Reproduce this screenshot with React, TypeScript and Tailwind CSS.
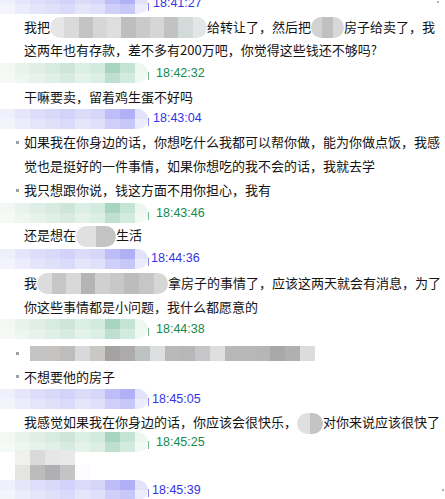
import React from 'react';

type Tone = 'blue' | 'green';

const BLUE_TOP = ['#f0f0fc', '#e6e6fb', '#dedefb', '#d9d9fa', '#d2d2fa', '#dcdcfa', '#d6d6f9', '#bdbdf8', '#b0b0f7', '#e2e2fb'];
const BLUE_BOT = ['#f4f4fd', '#ececfc', '#e4e4fb', '#e0e0fb', '#dadafa', '#e6e6fb', '#e0e0fa', '#cfcff9', '#c8c8f8', '#ececfc'];
const GREEN_TOP = ['#f3f8f5', '#e8f3ed', '#dfeee6', '#d8ebe1', '#cde6d9', '#dcefe6', '#d2eadf', '#a8d5bf', '#c4e4d5', '#eef6f1'];
const GREEN_BOT = ['#f6faf7', '#edf6f1', '#e6f2eb', '#e0efe7', '#d8ebe1', '#e4f2ea', '#dcefe6', '#bfe0cf', '#d2eadf', '#f2f8f4'];

const GRAY_A = ['#e6e6e6', '#dadada', '#c4c4c4', '#d6d6d6', '#dedede', '#bebebe', '#cacaca', '#d6d6d6', '#c2c2c2', '#d2dada', '#e2e6e6'];
const GRAY_B = ['#d2d2d2', '#c0c0c0', '#d8d8d8'];
const GRAY_C = ['#dcdcdc', '#c6c6c6', '#d8d8d8', '#b4b4b4', '#d0d0d0', '#c8c8c8', '#bcbcbc', '#c6c6c6', '#d6d6d6'];
const GRAY_D = ['#e0e0e0', '#c4c4c4'];
const GRAY_LINE = [
  '#c2c3c5', '#c5c2c0', '#bdbdbd', '#d8d9db', '#cac8c4', '#a4a2a2', '#adabab', '#bdc2c2', '#dcdee0',
  '#b9b9b9', '#b8b6b8', '#c4c6c8', '#e0dedc', '#b8b8b8', '#b8b8b8', '#b6b6b6', '#a8a8a8', '#b0b0b0', '#dcdcdc',
];

function NameBlur({ tone, time, mark }: { tone: Tone; time: string; mark: string }) {
  const top = tone === 'blue' ? BLUE_TOP : GREEN_TOP;
  const bot = tone === 'blue' ? BLUE_BOT : GREEN_BOT;
  const color = tone === 'blue' ? 'text-[#3434e6]' : 'text-[#158a4c]';
  return (
    <div className="flex items-center h-full">
      <div className="flex flex-col w-[148px] h-[20px] rounded-r-full overflow-hidden">
        <div className="flex h-[10px]">
          {top.map((c, i) => (
            <span key={i} className="w-[15px] h-full shrink-0" style={{ background: c }} />
          ))}
        </div>
        <div className="flex h-[10px]">
          {bot.map((c, i) => (
            <span key={i} className="w-[15px] h-full shrink-0" style={{ background: c }} />
          ))}
        </div>
      </div>
      <span className={`w-px h-[8px] mt-[6px] bg-current opacity-60 ${color} ${mark}`} />
      <span className={`font-['Liberation_Sans',sans-serif] text-[12.5px] leading-none ${color}`}>{time}</span>
    </div>
  );
}

function Blur({ colors, width }: { colors: string[]; width: string }) {
  return (
    <span className={`inline-flex align-middle h-[21px] -my-[4px] rounded-full overflow-hidden ${width}`}>
      {colors.map((c, i) => (
        <span key={i} className="flex-1 h-full" style={{ background: c }} />
      ))}
    </span>
  );
}

function Line({ children, dot, h }: { children: React.ReactNode; dot?: boolean; h: string }) {
  return (
    <div className={`relative flex items-center pl-[24px] ${h}`}>
      {dot && <span className="absolute left-[16px] top-1/2 -mt-[1px] w-[3px] h-[3px] bg-[#9aa0a6]" />}
      <span className="whitespace-nowrap">{children}</span>
    </div>
  );
}

export default function App() {
  return (
    <div className="w-[445px] h-[499px] overflow-hidden bg-white text-[13px] leading-none text-[#141414] font-['Noto_Sans_CJK_SC',sans-serif]">
      <div className="flex flex-col -mt-[9px]">
        <div className="h-[25px] relative">
          <NameBlur tone="blue" time="18:41:27" mark="mr-[4px]" />
          <span className="absolute right-[6px] top-[10px] w-[2px] h-[2px] bg-[#b0b0b0]" />
        </div>
        <Line h="h-[22px]">
          我把<Blur colors={GRAY_A} width="w-[157px]" />给转让了，然后把<Blur colors={GRAY_B} width="w-[33px]" />房子给卖了，我
        </Line>
        <Line h="h-[23px]">这两年也有存款，差不多有200万吧，你觉得这些钱还不够吗?</Line>
        <div className="h-[24px]">
          <NameBlur tone="green" time="18:42:32" mark="mr-[7px]" />
        </div>
        <Line h="h-[22px]">干嘛要卖，留着鸡生蛋不好吗</Line>
        <div className="h-[23px]">
          <NameBlur tone="blue" time="18:43:04" mark="mr-[4px]" />
        </div>
        <Line h="h-[23px]" dot>
          如果我在你身边的话，你想吃什么我都可以帮你做，能为你做点饭，我感
        </Line>
        <Line h="h-[25px]">觉也是挺好的一件事情，如果你想吃的我不会的话，我就去学</Line>
        <Line h="h-[23px]" dot>
          我只想跟你说，钱这方面不用你担心，我有
        </Line>
        <div className="h-[24px]">
          <NameBlur tone="green" time="18:43:46" mark="mr-[7px]" />
        </div>
        <Line h="h-[21px]">
          还是想在<Blur colors={GRAY_D} width="w-[40px]" />生活
        </Line>
        <div className="h-[25px]">
          <NameBlur tone="blue" time="18:44:36" mark="mr-[2px]" />
        </div>
        <Line h="h-[24px]">
          我<Blur colors={GRAY_C} width="w-[131px]" />拿房子的事情了，应该这两天就会有消息，为了
        </Line>
        <Line h="h-[22px]">你这些事情都是小问题，我什么都愿意的</Line>
        <div className="h-[24px]">
          <NameBlur tone="green" time="18:44:38" mark="mr-[7px]" />
        </div>
        <div className="relative flex items-center h-[24px] pl-[30px]">
          <span className="absolute left-[16px] top-1/2 -mt-[1px] w-[3px] h-[3px] bg-[#9aa0a6]" />
          <div className="flex h-[15px]">
            {GRAY_LINE.map((c, i) => (
              <span key={i} className="w-[15px] h-full" style={{ background: c }} />
            ))}
          </div>
        </div>
        <Line h="h-[22px]" dot>
          不想要他的房子
        </Line>
        <div className="h-[24px]">
          <NameBlur tone="blue" time="18:45:05" mark="mr-[3px]" />
        </div>
        <Line h="h-[23px]">
          我感觉如果我在你身边的话，你应该会很快乐，<Blur colors={GRAY_D} width="w-[26px]" />对你来说应该很快了
        </Line>
        <div className="h-[16px] overflow-visible">
          <div className="-mt-[4px] h-[24px]">
            <NameBlur tone="green" time="18:45:25" mark="mr-[7px]" />
          </div>
        </div>
        <div className="grid grid-cols-[15px_15px_15px_15px_15px_15px] grid-rows-[15px_15px] h-[30px]">
          <span />
          <span className="bg-[#f0f0ee]" />
          <span className="bg-[#dadada]" />
          <span className="bg-[#e6e6e6]" />
          <span className="bg-[#e9e9e9]" />
          <span />
          <span />
          <span className="bg-[#e4e4e2]" />
          <span className="bg-[#bcbcbc]" />
          <span className="bg-[#b0b0b4]" />
          <span className="bg-[#c4c4c4]" />
          <span className="bg-[#fafcff]" />
        </div>
        <div className="h-[20px] relative">
          <NameBlur tone="blue" time="18:45:39" mark="mr-[3px]" />
          <span className="absolute right-[1px] top-[9px] w-[2px] h-[2px] bg-[#b0b0b0]" />
        </div>
      </div>
    </div>
  );
}
